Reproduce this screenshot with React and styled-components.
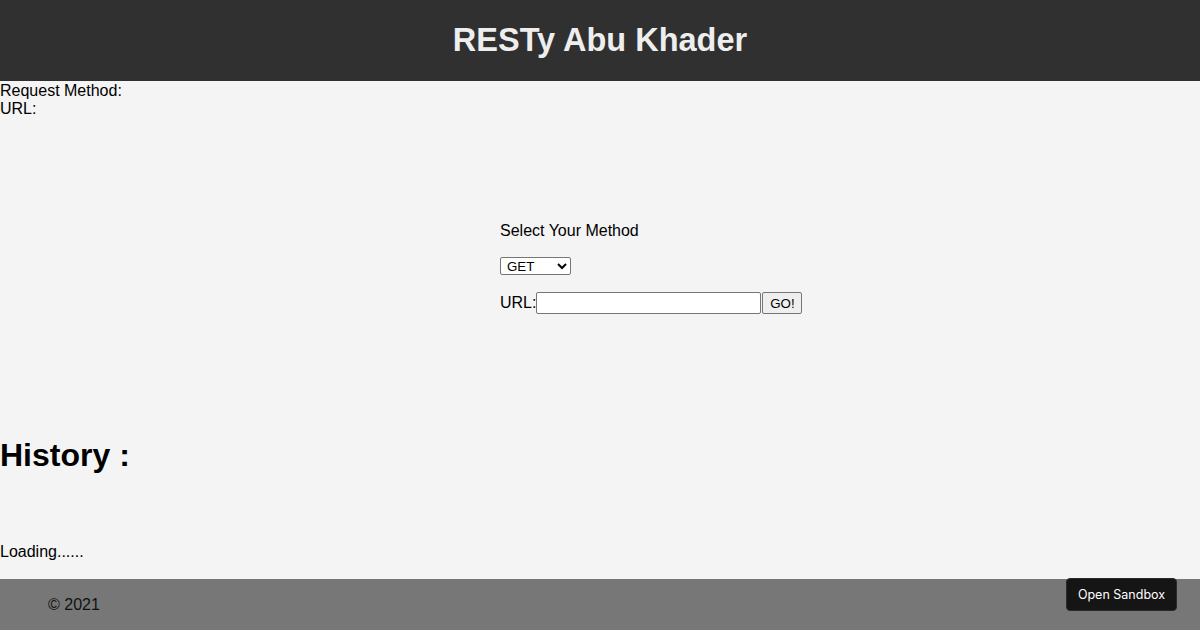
import styled, { createGlobalStyle } from "styled-components";

const Global = createGlobalStyle`
    html, body {
        margin: 0;
        padding: 0;
        background: #f4f4f4;
        font-family: "Liberation Sans", Arial, sans-serif;
        color: #000;
    }
`;

export default function App(){
    return(
        <>
            <Global />
            <Cabecalho>
                <h1>RESTy Abu Khader</h1>
            </Cabecalho>
            <Resultado>
                <div>Request Method:</div>
                <div>URL:</div>
            </Resultado>
            <Forms>
                <form onSubmit={(e)=>e.preventDefault()}>
                    <Titulo>Select Your Method</Titulo>
                    <Metodo defaultValue="GET">
                        <option>GET</option>
                        <option>POST</option>
                        <option>PUT</option>
                        <option>DELETE</option>
                    </Metodo>
                    <Linha>
                        <label htmlFor="url">URL:</label>
                        <Inserir id="url" type="text" />
                        <Botao type="submit">GO!</Botao>
                    </Linha>
                </form>
            </Forms>
            <Historico>History :</Historico>
            <Carregando>Loading......</Carregando>
            <Rodape>
                <span>© 2021</span>
            </Rodape>
            <Sandbox>Open Sandbox</Sandbox>
        </>
    );
}

const Cabecalho = styled.header`
    display: flex;
    justify-content: center;
    align-items: center;
    height: 81px;
    background: #303030;
    h1{
        margin: 0;
        font-size: 32.5px;
        font-weight: 700;
        color: #eeeeee;
    }
`;
const Resultado = styled.section`
    font-size: 16px;
    line-height: 18px;
    padding-top: 1px;
`;
const Forms = styled.section`
    display: flex;
    justify-content: center;
    padding-top: 104px;
    form{
        display: flex;
        flex-direction: column;
        align-items: flex-start;
        width: 200px;
    }
`;
const Titulo = styled.p`
    margin: 0 0 17px;
    font-size: 16px;
    line-height: 18px;
`;
const Metodo = styled.select`
    width: 71px;
    height: 18px;
    padding: 0 0 0 2px;
    font-family: "Liberation Sans", Arial, sans-serif;
    font-size: 13.3px;
    border: 1px solid #767676;
    border-radius: 2px;
    background: #fff;
    margin-bottom: 17px;
`;
const Linha = styled.div`
    display: flex;
    align-items: center;
    white-space: nowrap;
    label{
        font-size: 16px;
    }
`;
const Inserir = styled.input`
    width: 225px;
    height: 22px;
    box-sizing: border-box;
    border: 1px solid #767676;
    border-radius: 2px;
    background: #fff;
    padding: 1px 2px;
    margin: 0;
`;
const Botao = styled.button`
    width: 40px;
    height: 22px;
    margin: 0 0 0 1px;
    padding: 0;
    box-sizing: border-box;
    font-family: "Liberation Sans", Arial, sans-serif;
    font-size: 13.3px;
    background: #efefef;
    border: 1px solid #767676;
    border-radius: 2px;
    color: #000;
`;
const Historico = styled.h1`
    margin: 123px 0 0;
    font-size: 32px;
    line-height: 37px;
    font-weight: 700;
`;
const Carregando = styled.p`
    margin: 69px 0 0;
    font-size: 16px;
    line-height: 18px;
`;
const Rodape = styled.footer`
    display: flex;
    align-items: center;
    margin-top: 18px;
    height: 51px;
    padding-left: 48px;
    background: #777777;
    font-size: 16px;
    color: #111;
`;
const Sandbox = styled.button`
    position: fixed;
    right: 23px;
    bottom: 19px;
    width: 111px;
    height: 33px;
    background: #151515;
    color: #fff;
    border: 1px solid #2a2a2a;
    border-radius: 4px;
    font-family: Inter, "Liberation Sans", sans-serif;
    font-size: 12.5px;
    cursor: pointer;
`;
